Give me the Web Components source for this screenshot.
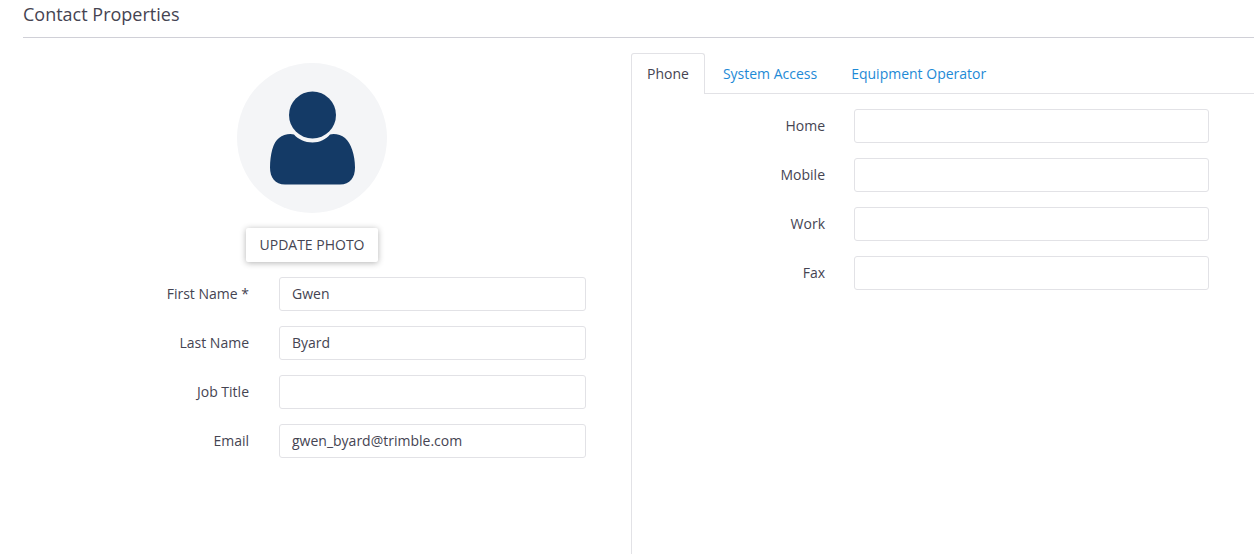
<!DOCTYPE html>
<html>
<head>
<meta charset="utf-8">
<title>Contact Properties</title>
<style>
  html, body { margin: 0; height: 100%; overflow: hidden; background: #fff; }
  body { font-family: "Open Sans", sans-serif; font-size: 14px; color: #454452; }
</style>
</head>
<body>
<contact-page>
  <contact-avatar slot="left"></contact-avatar>
  <form-field slot="left" label="First Name *" label-width="226" label-gap="30" input-width="307">Gwen</form-field>
  <form-field slot="left" label="Last Name" label-width="226" label-gap="30" input-width="307">Byard</form-field>
  <form-field slot="left" label="Job Title" label-width="226" label-gap="30" input-width="307"></form-field>
  <form-field slot="left" label="Email" label-width="226" label-gap="30" input-width="307">gwen_byard@trimble.com</form-field>

  <tab-bar slot="right">
    <tab-item active>Phone</tab-item>
    <tab-item>System Access</tab-item>
    <tab-item>Equipment Operator</tab-item>
  </tab-bar>
  <phone-panel slot="right">
    <form-field label="Home" label-width="193" label-gap="29" input-width="355"></form-field>
    <form-field label="Mobile" label-width="193" label-gap="29" input-width="355"></form-field>
    <form-field label="Work" label-width="193" label-gap="29" input-width="355"></form-field>
    <form-field label="Fax" label-width="193" label-gap="29" input-width="355"></form-field>
  </phone-panel>
</contact-page>

<script>
class ContactPage extends HTMLElement {
    connectedCallback() {
        const shadowRoot = this.attachShadow({ mode: 'open' });
        shadowRoot.innerHTML = `
        <style>
            :host {
                display: block;
                padding-left: 23px;
                height: 554px;
                box-sizing: border-box;
            }
            h1 {
                margin: 0;
                height: 37px;
                box-sizing: content-box;
                border-bottom: 1px solid #d0d0d7;
                font-size: 18px;
                font-weight: 400;
                line-height: 28px;
                color: #454452;
            }
            .columns {
                display: flex;
                height: 516px;
            }
            .left {
                width: 608px;
                padding-top: 25px;
                box-sizing: border-box;
            }
            .right {
                flex: 1;
                padding-top: 15px;
            }
        </style>
        <h1>Contact Properties</h1>
        <div class="columns">
            <div class="left"><slot name="left"></slot></div>
            <div class="right"><slot name="right"></slot></div>
        </div>
        `;
    }
}

class ContactAvatar extends HTMLElement {
    connectedCallback() {
        const shadowRoot = this.attachShadow({ mode: 'open' });
        shadowRoot.innerHTML = `
        <style>
            :host {
                display: flex;
                flex-direction: column;
                align-items: center;
                width: 578px;
                margin-bottom: 15px;
            }
            .circle {
                width: 150px;
                height: 150px;
                border-radius: 50%;
                background: #f4f5f7;
                margin-bottom: 15px;
            }
            svg { display: block; }
            button {
                width: 132px;
                height: 34px;
                padding: 0 0 2px;
                border: none;
                border-radius: 2px;
                background: #fff;
                box-shadow: 0 1px 6px rgba(0, 0, 0, 0.3);
                color: #454452;
                font: 400 14px "Open Sans", sans-serif;
            }
        </style>
        <div class="circle">
            <svg width="150" height="150" viewBox="0 0 150 150">
                <circle cx="75.5" cy="52" r="23.5" fill="#143a66"/>
                <path fill="#143a66" d="M33 104.500 C33 92 36 79 42 75 C46 71.500 53 70 57 71.500 C61 76 68 79.500 75.500 79.500 C83 79.500 89 76 93 71.500 C97 70 104 71.500 108 75 C114 80 118 92 118 104.500 C118 114.500 113 121.500 103 121.500 L48 121.500 C38 121.500 33 114.500 33 104.500 Z"/>
            </svg>
        </div>
        <button>UPDATE PHOTO</button>
        `;
    }
}

class FormField extends HTMLElement {
    connectedCallback() {
        const shadowRoot = this.attachShadow({ mode: 'open' });
        const labelWidth = this.getAttribute('label-width');
        const labelGap = this.getAttribute('label-gap');
        const inputWidth = this.getAttribute('input-width');
        shadowRoot.innerHTML = `
        <style>
            :host {
                display: flex;
                align-items: center;
                margin-bottom: 15px;
                height: 34px;
            }
            label {
                width: ${labelWidth}px;
                margin-right: ${labelGap}px;
                padding-bottom: 2px;
                text-align: right;
                color: #454452;
                white-space: nowrap;
            }
            .input {
                width: ${inputWidth}px;
                height: 34px;
                box-sizing: border-box;
                padding: 0 12px;
                border: 1px solid #e2e2e6;
                border-radius: 3px;
                line-height: 32px;
                background: #fff;
                color: #454452;
            }
        </style>
        <label>${this.getAttribute('label')}</label>
        <div class="input"><slot></slot></div>
        `;
    }
}

class TabBar extends HTMLElement {
    connectedCallback() {
        const shadowRoot = this.attachShadow({ mode: 'open' });
        shadowRoot.innerHTML = `
        <style>
            :host {
                display: flex;
                height: 41px;
                box-sizing: border-box;
                border-bottom: 1px solid #e2e2e6;
            }
        </style>
        <slot></slot>
        `;
    }
}

class TabItem extends HTMLElement {
    connectedCallback() {
        const shadowRoot = this.attachShadow({ mode: 'open' });
        shadowRoot.innerHTML = `
        <style>
            :host {
                display: block;
                height: 41px;
                box-sizing: border-box;
                padding: 0 15px;
                border: 1px solid transparent;
                border-bottom: none;
                line-height: 40px;
                color: #1e8ad6;
                white-space: nowrap;
                margin-right: 2px;
            }
            :host([active]) {
                color: #454452;
                background: #fff;
                border-color: #e2e2e6;
                border-radius: 3px 3px 0 0;
                margin-right: 2px;
            }
        </style>
        <slot></slot>
        `;
    }
}

class PhonePanel extends HTMLElement {
    connectedCallback() {
        const shadowRoot = this.attachShadow({ mode: 'open' });
        shadowRoot.innerHTML = `
        <style>
            :host {
                display: block;
                height: 460px;
                padding-top: 15px;
                border-left: 1px solid #e2e2e6;
                box-sizing: border-box;
            }
        </style>
        <slot></slot>
        `;
    }
}

customElements.define('contact-page', ContactPage);
customElements.define('contact-avatar', ContactAvatar);
customElements.define('form-field', FormField);
customElements.define('tab-bar', TabBar);
customElements.define('tab-item', TabItem);
customElements.define('phone-panel', PhonePanel);
</script>
</body>
</html>
